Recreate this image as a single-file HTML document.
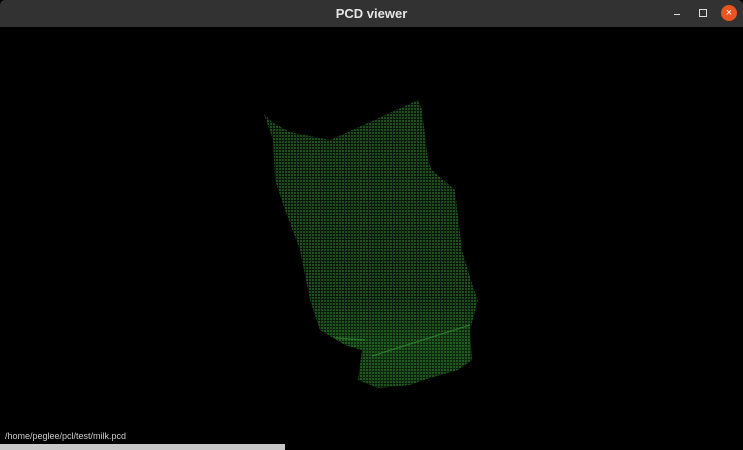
<!DOCTYPE html>
<html><head><style>
html,body{margin:0;padding:0;width:743px;height:450px;overflow:hidden;background:#000;font-family:"Liberation Sans",sans-serif}
.tb{position:absolute;left:0;top:0;width:743px;height:27px;background:#323232;border-radius:5px 5px 0 0}
.t{position:absolute;left:0;width:743px;top:6px;text-align:center;color:#e6e6e6;font-weight:bold;font-size:13px}
.x{position:absolute;left:721px;top:5px;width:16px;height:16px;border-radius:50%;background:#e95420;color:#fff;font-size:11px;text-align:center;line-height:16px}
.bar{position:absolute;left:0;top:444px;width:285px;height:6px;background:#c8c8c8}
.lbl{position:absolute;left:5px;top:431px;color:#ccc;font-size:9px}
</style></head><body>
<div class="tb"><div class="t">PCD viewer</div>
<div style="position:absolute;left:674px;top:14px;width:6px;height:1px;background:#ddd"></div>
<div style="position:absolute;left:699px;top:9px;width:6px;height:6px;border:1px solid #ddd"></div>
<div class="x">×</div></div>
<svg style="position:absolute;left:0;top:0" width="743" height="450">
<defs><pattern id="p" width="3" height="3" patternUnits="userSpaceOnUse"><rect width="3" height="3" fill="#081608"/><rect width="2" height="2" fill="#1d4f1f"/></pattern>
<linearGradient id="g" x1="0" y1="0" x2="0" y2="1"><stop offset="0.7" stop-color="#3c3" stop-opacity="0"/><stop offset="0.85" stop-color="#3c3" stop-opacity="0.12"/><stop offset="1" stop-color="#3c3" stop-opacity="0.05"/></linearGradient></defs>
<g>
<polygon fill="url(#p)" points="264,114 272,122 290,132 330,140 370,122 418,100 422,110 428,160 432,170 455,190 462,250 474,290 478,300 470,330 472,360 458,370 430,378 410,385 378,388 358,380 362,350 345,345 320,330 310,300 300,250 285,210 275,180 273,140"/>
<polygon fill="url(#g)" points="264,114 272,122 290,132 330,140 370,122 418,100 422,110 428,160 432,170 455,190 462,250 474,290 478,300 470,330 472,360 458,370 430,378 410,385 378,388 358,380 362,350 345,345 320,330 310,300 300,250 285,210 275,180 273,140"/>
<path d="M335,338 L365,340 M372,356 L470,325" stroke="#3fae3f" stroke-width="1.2" opacity="0.5"/>
</g></svg>
<div class="lbl">/home/peglee/pcl/test/milk.pcd</div>
<div class="bar"></div>
</body></html>
